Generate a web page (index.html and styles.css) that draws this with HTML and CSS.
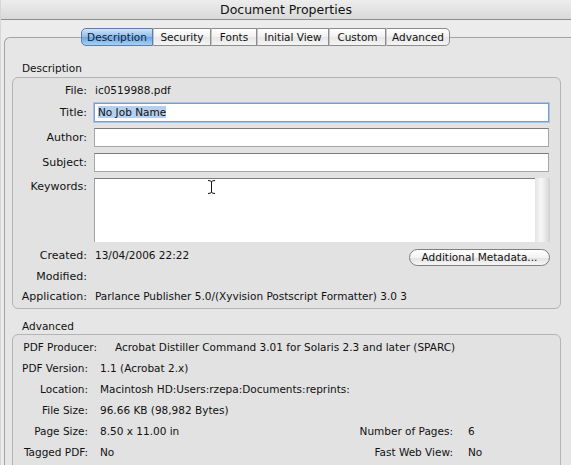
FILE: index.html
```html
<!DOCTYPE html>
<html lang="en">
<head>
    <meta charset="UTF-8">
    <title>Document Properties</title>
    <link rel="stylesheet" href="styles.css">
</head>
<body>
    <div class="window">
        <div class="titlebar">Document Properties</div>

        <div class="tabview">
            <div class="tabs">
                <div class="tab active" style="width:72px">Description</div>
                <div class="tab" style="width:58px">Security</div>
                <div class="tab" style="width:46px">Fonts</div>
                <div class="tab" style="width:72px">Initial View</div>
                <div class="tab" style="width:57px">Custom</div>
                <div class="tab" style="width:64px">Advanced</div>
            </div>

            <div class="tab-box">
                <div class="group-label">Description</div>
                <div class="group desc">
                    <div class="row plain">
                        <div class="label">File:</div>
                        <div class="value">ic0519988.pdf</div>
                    </div>
                    <div class="row field">
                        <div class="label">Title:</div>
                        <div class="input focused"><span class="selected">No Job Name</span></div>
                    </div>
                    <div class="row field">
                        <div class="label">Author:</div>
                        <div class="input"></div>
                    </div>
                    <div class="row field">
                        <div class="label">Subject:</div>
                        <div class="input"></div>
                    </div>
                    <div class="row area">
                        <div class="label">Keywords:</div>
                        <div class="textarea">
                            <div class="textarea-body">
                                <svg class="ibeam" width="9" height="16" viewBox="0 0 9 16">
                                    <path d="M1 1.5 Q4.5 1.5 4.5 3 L4.5 13 Q4.5 14.5 1 14.5 M8 1.5 Q4.5 1.5 4.5 3 M4.5 13 Q4.5 14.5 8 14.5" fill="none" stroke="#111" stroke-width="1"/>
                                </svg>
                            </div>
                            <div class="scroll"></div>
                        </div>
                    </div>
                    <div class="row created">
                        <div class="label">Created:</div>
                        <div class="value">13/04/2006 22:22</div>
                        <button class="pill">Additional Metadata...</button>
                    </div>
                    <div class="row plain">
                        <div class="label">Modified:</div>
                        <div class="value"></div>
                    </div>
                    <div class="row plain">
                        <div class="label">Application:</div>
                        <div class="value">Parlance Publisher 5.0/(Xyvision Postscript Formatter) 3.0 3</div>
                    </div>
                </div>

                <div class="group-label adv-label">Advanced</div>
                <div class="group adv">
                    <div class="arow">
                        <div class="alabel wide">PDF Producer:</div>
                        <div class="avalue wide">Acrobat Distiller Command 3.01 for Solaris 2.3 and later (SPARC)</div>
                    </div>
                    <div class="arow">
                        <div class="alabel">PDF Version:</div>
                        <div class="avalue">1.1 (Acrobat 2.x)</div>
                    </div>
                    <div class="arow">
                        <div class="alabel">Location:</div>
                        <div class="avalue">Macintosh HD:Users:rzepa:Documents:reprints:</div>
                    </div>
                    <div class="arow">
                        <div class="alabel">File Size:</div>
                        <div class="avalue">96.66 KB (98,982 Bytes)</div>
                    </div>
                    <div class="arow">
                        <div class="alabel">Page Size:</div>
                        <div class="avalue half">8.50 x 11.00 in</div>
                        <div class="rlabel">Number of Pages:</div>
                        <div class="rvalue">6</div>
                    </div>
                    <div class="arow">
                        <div class="alabel">Tagged PDF:</div>
                        <div class="avalue half">No</div>
                        <div class="rlabel">Fast Web View:</div>
                        <div class="rvalue">No</div>
                    </div>
                </div>
            </div>
        </div>
    </div>
</body>
</html>
```

FILE: styles.css
```css
html, body {
    margin: 0;
    padding: 0;
}

body {
    width: 571px;
    height: 465px;
    overflow: hidden;
    background: #e9e9e9;
    font-family: "DejaVu Sans", "Liberation Sans", sans-serif;
    font-size: 11px;
    color: #111;
}

.window {
    height: 465px;
    overflow: hidden;
    background: #ececec;
    border-left: 1px solid #d6d6d6;
}

.titlebar {
    height: 19px;
    line-height: 19px;
    text-align: center;
    font-size: 12.5px;
    color: #111;
    background: linear-gradient(to bottom, #ededed, #d9d9d9);
    border-bottom: 1px solid #8f8f8f;
}

.tabview {
    padding: 8px 0 0 3px;
}

.tabs {
    display: flex;
    margin-left: 77px;
    position: relative;
    z-index: 1;
}

.tab {
    height: 18px;
    line-height: 16px;
    text-align: center;
    background: linear-gradient(to bottom, #ffffff, #f1f1f1 50%, #e6e6e6 51%, #f4f4f4);
    border: 1px solid #8c8c8c;
    border-left: 1px solid #c4c4c4;
    box-sizing: border-box;
    font-size: 10.5px;
    white-space: nowrap;
}

.tab:first-child {
    border-left: 1px solid #5d7ea8;
    border-radius: 5px 0 0 5px;
}

.tab:last-child {
    border-radius: 0 5px 5px 0;
}

.tab.active {
    background: linear-gradient(to bottom, #cfe3fa, #8ebcec 50%, #6ea7e4 51%, #a6d0f7);
    border-color: #5d7ea8;
    color: #0d1f3a;
}

.tab-box {
    margin-top: -9px;
    height: 405px;
    background: #e6e6e6;
    border: 1px solid #a3a3a3;
    border-right: none;
    border-radius: 6px 0 0 0;
    padding: 23px 0 0 7px;
}

.group-label {
    margin-left: 10px;
    height: 14px;
    line-height: 14px;
    font-size: 10.5px;
}

.group {
    width: 547px;
    background: #e2e2e2;
    border: 1px solid #b4b4b4;
    border-radius: 6px;
}

.desc {
    height: 228px;
    margin-top: 2px;
    padding-top: 2px;
}

.row {
    display: flex;
    align-items: center;
}

.label {
    width: 74px;
    text-align: right;
    flex: none;
}

.value {
    margin-left: 8px;
    white-space: nowrap;
    font-size: 10.5px;
}

.row.plain {
    height: 20px;
}

.row.field {
    height: 25px;
}

.input {
    margin-left: 7px;
    width: 455px;
    height: 19px;
    line-height: 17px;
    background: #fff;
    border: 1px solid #a6a6a6;
    border-top-color: #7a7a7a;
    padding-left: 3px;
    box-sizing: border-box;
    font-size: 10.5px;
}

.input.focused {
    border: 1px solid #7b9ec9;
    box-shadow: 0 0 0 1px #a9c5e6;
}

.selected {
    background: #b4cff0;
}

.row.area {
    align-items: flex-start;
    height: 67px;
    padding-top: 3px;
    box-sizing: border-box;
}

.row.area .label {
    padding-top: 2px;
}

.textarea {
    margin-left: 7px;
    display: flex;
    width: 456px;
    height: 64px;
}

.textarea-body {
    position: relative;
    flex: 1;
    background: #fff;
    border-top: 1px solid #7d7d7d;
    border-left: 1px solid #a0a0a0;
}

.ibeam {
    position: absolute;
    left: 112px;
    top: 0;
}

.scroll {
    width: 15px;
    background: linear-gradient(to right, #e4e4e4, #f8f8f8 40%, #e0e0e0 80%, #cfcfcf);
}

.row.created {
    height: 20px;
    margin-top: 3px;
    margin-bottom: 1px;
}

.row.created .value {
    flex: 1;
}

.pill {
    margin-right: 10px;
    margin-top: 4px;
    width: 141px;
    height: 17px;
    padding: 0;
    font-family: inherit;
    font-size: 10.5px;
    color: #111;
    background: linear-gradient(to bottom, #ffffff, #f3f3f3 50%, #e3e3e3 55%, #f7f7f7);
    border: 1px solid #7e7e7e;
    border-radius: 9px;
}

.adv-label {
    margin-top: 10px;
}

.adv {
    height: 140px;
    margin-top: 1px;
    padding-top: 1px;
}

.arow {
    display: flex;
    align-items: center;
    height: 21px;
    font-size: 10.5px;
    white-space: nowrap;
}

.alabel {
    width: 75px;
    text-align: right;
    flex: none;
}

.alabel.wide {
    width: 84px;
}

.avalue {
    margin-left: 12px;
}

.avalue.wide {
    margin-left: 18px;
}

.avalue.half {
    width: 200px;
}

.rlabel {
    width: 153px;
    text-align: right;
}

.rvalue {
    margin-left: 15px;
}
```
